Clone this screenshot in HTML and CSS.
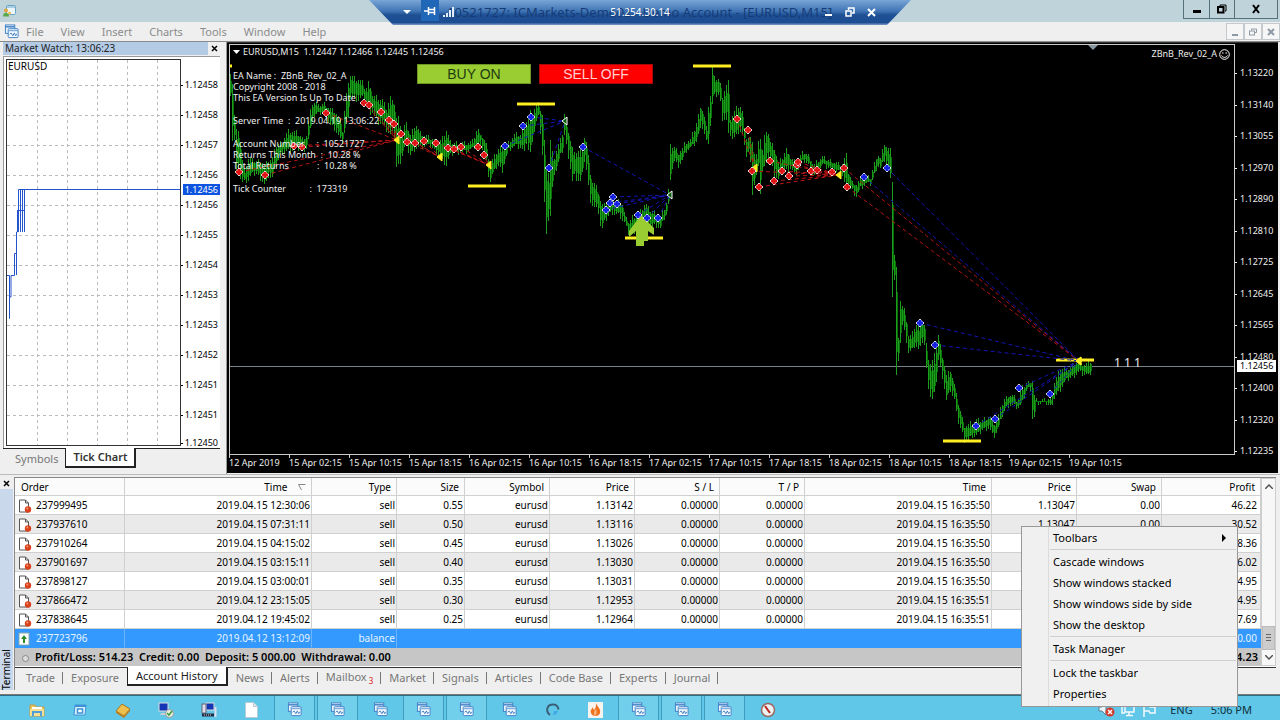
FILE: index.html
```html
<!DOCTYPE html>
<html lang="en">
<head>
    <meta charset="UTF-8">
    <meta name="viewport" content="width=device-width, initial-scale=1.0">
    <title>10521727: ICMarkets-Demo02 - Demo Account - [EURUSD,M15]</title>
    <link rel="stylesheet" href="styles.css">
</head>
<body>
    <!-- shared icons -->
    <svg class="sprites" width="0" height="0">
        <defs>
            <symbol id="i-chart" viewBox="0 0 16 16">
                <rect x="1.5" y="1" width="10" height="9" fill="#e8f3fc" stroke="#3f7fc4"/>
                <path d="M1.5 3h10" stroke="#3f7fc4" stroke-width="1.5"/>
                <rect x="4.5" y="5" width="10.5" height="9.5" rx="1" fill="#f4f9fe" stroke="#3f7fc4"/>
                <path d="M4.5 7h10.5" stroke="#7fb0e0" stroke-width="1.5"/>
                <path d="M6 11l1.5-1.5 2 3 1.5-3 1.5 3 1-2" fill="none" stroke="#3f7fc4"/>
            </symbol>
            <symbol id="i-doc" viewBox="0 0 14 14">
                <path d="M1.500 1h6l3 3v9h-9z" fill="#fff" stroke="#555"/>
                <path d="M7.500 1v3h3" fill="none" stroke="#555"/>
                <circle cx="10" cy="10.500" r="3.200" fill="#d8421c"/>
                <circle cx="9.300" cy="9.600" r="1" fill="#f59a78"/>
            </symbol>
        </defs>
    </svg>

    <header class="title-bar">
        <svg class="app-icon" width="14" height="14" viewBox="0 0 14 14">
            <rect x="3.500" y="1.500" width="9" height="9" rx="1" fill="#eaf5fb" stroke="#6aa5c8"/>
            <path d="M4 3h9" stroke="#6aa5c8"/>
            <circle cx="3" cy="6.500" r="2" fill="#e2a23c"/>
            <path d="M0 12.500c0-5 6-5 6 0z" fill="#5ba848"/>
            <circle cx="6.500" cy="9" r="1.500" fill="#f0c04a"/>
        </svg>
        <div class="window-buttons">
            <button aria-label="Minimize"><svg width="10" height="10" viewBox="0 0 10 10"><path d="M1 7.500h8" stroke="#000" stroke-width="3"/></svg></button>
            <button aria-label="Restore"><svg width="10" height="10" viewBox="0 0 10 10"><path d="M3 2V1h6v6H8" fill="none" stroke="#000"/><rect x="1" y="3" width="5.500" height="5.500" fill="none" stroke="#000" stroke-width="2"/></svg></button>
            <button class="wide" aria-label="Close"><svg width="10" height="10" viewBox="0 0 10 10"><path d="M2 1l6 8M8 1L2 9" stroke="#000" stroke-width="2"/></svg></button>
        </div>
        <div class="rdp-bar">
            <span class="rdp-title">10521727: ICMarkets-Demo02 - Demo Account - [EURUSD,M15]</span>
            <button class="rdp-menu" aria-label="Menu"><svg width="8" height="4"><path d="M0 0h8L4 4z" fill="#fff"/></svg></button>
            <button class="rdp-pin" aria-label="Pin"><svg width="12" height="10"><path d="M0 5h4M4.500 1v8M4 3.500h6M4 6.500h6M10.500 1v8" stroke="#fff" stroke-width="1.500"/></svg></button>
            <button class="rdp-signal" aria-label="Connection"><svg width="12" height="12"><path d="M1 9v2M4 7v4M7 4v7M10 1v10" stroke="#e4edf8" stroke-width="2"/></svg></button>
            <span class="rdp-ip">51.254.30.14</span>
            <button class="rdp-min" aria-label="Minimize"><svg width="8" height="10"><path d="M0 8h7" stroke="#fff" stroke-width="2"/></svg></button>
            <button class="rdp-restore" aria-label="Restore"><svg width="10" height="10"><path d="M3.500 3V1h5.500v5H7" fill="none" stroke="#fff" stroke-width="1.500"/><rect x="1" y="4" width="5" height="5" fill="none" stroke="#fff" stroke-width="1.500"/></svg></button>
            <button class="rdp-close" aria-label="Close"><svg width="9" height="9"><path d="M1 1l7 7M8 1L1 8" stroke="#fff" stroke-width="2"/></svg></button>
        </div>
    </header>

    <nav class="menu-bar">
        <svg width="15" height="15"><use href="#i-chart"/></svg>
        <button>File</button>
        <button>View</button>
        <button>Insert</button>
        <button>Charts</button>
        <button>Tools</button>
        <button>Window</button>
        <button>Help</button>
        <div class="child-buttons">
            <button aria-label="Minimize chart"><svg width="8" height="8"><path d="M1 7h6" stroke="#8d9aa6" stroke-width="2"/></svg></button>
            <button aria-label="Restore chart"><svg width="8" height="8"><path d="M2.500 2.500V1h5v3.500H6" fill="none" stroke="#8d9aa6"/><rect x=".5" y="3" width="5" height="4" fill="none" stroke="#8d9aa6"/></svg></button>
            <button aria-label="Close chart"><svg width="8" height="8"><path d="M1 1l6 6M7 1L1 7" stroke="#8d9aa6" stroke-width="2"/></svg></button>
        </div>
    </nav>

    <main class="workspace">
        <section class="market-watch">
            <div class="panel-head">
                <h2>Market Watch: 13:06:23</h2>
                <button aria-label="Close Market Watch"><svg width="7" height="7"><path d="M1 1l5 5M6 1L1 6" stroke="#000" stroke-width="1.500"/></svg></button>
            </div>
            <div class="tick-panel">
                <div class="tick-plot">
                    <span>EURUSD</span>
                    <svg id="tick-svg" width="100%" height="100%"></svg>
                </div>
                <div class="tick-scale" id="tick-scale">
                    <b class="tick-now">1.12456</b>
                </div>
            </div>
            <div class="watch-tabs">
                <button>Symbols</button>
                <button class="active">Tick Chart</button>
            </div>
        </section>

        <section class="chart">
            <div class="plot">
                <svg id="plot-svg" width="100%" height="100%"></svg>
                <div class="plot-title">
                    <svg width="7" height="4"><path d="M0 0h7L3.500 4z" fill="#fff"/></svg>
                    <span>EURUSD,M15&nbsp; 1.12447 1.12466 1.12445 1.12456</span>
                </div>
                <div class="ea-info">
                    <p>EA Name :  ZBnB_Rev_02_A
Copyright 2008 - 2018
This EA Version Is Up To Date</p>
                    <p>Server Time  :  2019.04.19 13:06:22</p>
                    <p>Account Number     :  10521727
Returns This Month  :  10.28 %
Total Returns            :  10.28 %</p>
                    <p>Tick Counter          :  173319</p>
                </div>
                <div class="ea-buttons">
                    <button class="buy">BUY ON</button>
                    <button class="sell">SELL OFF</button>
                </div>
                <div class="ea-name">
                    <span>ZBnB_Rev_02_A</span>
                    <svg width="11" height="11" viewBox="0 0 11 11"><circle cx="5.500" cy="5.500" r="4.800" fill="none" stroke="#fff"/><path d="M3 4h1.500M6.500 4H8M2.500 6.500c1 2.500 5 2.500 6 0" fill="none" stroke="#fff"/></svg>
                </div>
                <span class="ea-count">1 1 1</span>
            </div>
            <div class="price-axis" id="price-axis">
                <b class="price-now">1.12456</b>
            </div>
            <div class="time-axis" id="time-axis"></div>
        </section>
    </main>

    <section class="terminal">
        <div class="terminal-side">
            <button aria-label="Close Terminal"><svg width="7" height="7"><path d="M1 1l5 5M6 1L1 6" stroke="#000" stroke-width="1.500"/></svg></button>
            <span>Terminal</span>
        </div>
        <div class="terminal-main">
            <div class="history">
                <table>
                    <colgroup>
                        <col class="c-order"><col class="c-time"><col class="c-type"><col class="c-size">
                        <col class="c-num"><col class="c-num"><col class="c-num"><col class="c-num">
                        <col class="c-time"><col class="c-num"><col class="c-num"><col>
                    </colgroup>
                    <thead>
                        <tr>
                            <th>Order</th>
                            <th>Time <svg class="sort" width="8" height="7"><path d="M7.500 .5H.5L3.500 6" fill="none" stroke="#888"/></svg></th>
                            <th>Type</th><th>Size</th><th>Symbol</th><th>Price</th>
                            <th>S / L</th><th>T / P</th><th>Time</th><th>Price</th><th>Swap</th><th>Profit</th>
                        </tr>
                    </thead>
                    <tbody id="orders"></tbody>
                    <tfoot>
                        <tr>
                            <td colspan="11"><i class="dot"></i>Profit/Loss: 514.23&nbsp; Credit: 0.00&nbsp; Deposit: 5 000.00&nbsp; Withdrawal: 0.00</td>
                            <td>5 514.23</td>
                        </tr>
                    </tfoot>
                </table>
                <div class="scrollbar">
                    <button aria-label="Scroll up"><svg width="8" height="5"><path d="M0 5l4-4 4 4" fill="none" stroke="#555" stroke-width="1.500"/></svg></button>
                    <div class="thumb"></div>
                    <button aria-label="Scroll down"><svg width="8" height="5"><path d="M0 0l4 4 4-4" fill="none" stroke="#555" stroke-width="1.500"/></svg></button>
                </div>
            </div>
            <div class="terminal-tabs">
                <button>Trade</button>
                <button>Exposure</button>
                <button class="active">Account History</button>
                <button>News</button>
                <button>Alerts</button>
                <button>Mailbox<sub>3</sub></button>
                <button>Market</button>
                <button>Signals</button>
                <button>Articles</button>
                <button>Code Base</button>
                <button>Experts</button>
                <button>Journal</button>
            </div>
        </div>
    </section>

    <footer class="taskbar">
        <button aria-label="File Explorer"><svg width="16" height="16" viewBox="0 0 16 16"><path d="M1 3h5l1 2h8v9H1z" fill="#e9c763" stroke="#c89c3a"/><rect x="3" y="5" width="10" height="4" fill="#fff"/><path d="M1 7h14v7H1z" fill="#f6df91"/><path d="M4 14v-4h8v4" fill="none" stroke="#4f9ed8" stroke-width="2"/></svg></button>
        <button aria-label="Server window"><svg width="14" height="14" viewBox="0 0 14 14"><path d="M2 2h11l-1 10H1z" fill="#d8f0fc" stroke="#3c92d4"/><path d="M2 3h11" stroke="#3c92d4" stroke-width="2"/><path d="M4.500 6h5v4h-5z" fill="#fff" stroke="#3c92d4" stroke-width="1.500"/></svg></button>
        <button aria-label="Log book"><svg width="16" height="16" viewBox="0 0 16 16"><path d="M1 9l6-7 8 5-6 7z" fill="#f0c04e" stroke="#a8761c"/><path d="M1 9v2l8 5 6-7V7l-6 7z" fill="#b98224"/></svg></button>
        <button aria-label="Remote computer"><svg width="16" height="16" viewBox="0 0 16 16"><rect x="1" y="1" width="9" height="8" fill="#1436b4" stroke="#ddd"/><path d="M3 11h6v2H2z" fill="#ccc"/><circle cx="11.500" cy="11.500" r="4" fill="#e8efe8" stroke="#999"/><path d="M9 11l2 2 3-4" fill="none" stroke="#3a9d3a" stroke-width="1.500"/></svg></button>
        <button aria-label="Network"><svg width="16" height="16" viewBox="0 0 16 16"><rect x="5" y="1" width="8" height="7" fill="#1436b4" stroke="#ddd"/><rect x="1" y="2" width="4" height="9" fill="#dde" stroke="#667"/><path d="M1 11.500h12v3H1z" fill="#222a44"/><path d="M3 13h8" stroke="#ddd" stroke-dasharray="1 1"/><path d="M14.500 5v10" stroke="#dde" stroke-width="2"/></svg></button>
        <button aria-label="Document"><svg width="13" height="16" viewBox="0 0 13 16"><path d="M.5.500h8l4 4v11H.5z" fill="#fff" stroke="#b9cbd3"/><path d="M8.500.500v4h4" fill="#dde8ee" stroke="#b9cbd3"/></svg></button>
        <button class="open" aria-label="MT4 terminal 1"><svg width="15" height="15"><use href="#i-chart"/></svg></button>
        <button class="open" aria-label="MT4 terminal 2"><svg width="15" height="15"><use href="#i-chart"/></svg></button>
        <button aria-label="MT4 terminal 3"><svg width="15" height="15"><use href="#i-chart"/></svg></button>
        <button class="open" aria-label="MT4 terminal 4"><svg width="15" height="15"><use href="#i-chart"/></svg></button>
        <button class="open" aria-label="MT4 terminal 5"><svg width="15" height="15"><use href="#i-chart"/></svg></button>
        <button aria-label="MT4 terminal 6"><svg width="15" height="15"><use href="#i-chart"/></svg></button>
        <button aria-label="Sync"><svg width="16" height="14" viewBox="0 0 16 14"><path d="M5 12C0 8 2 1.500 8 1.500c3 0 5 2 5.500 5" fill="none" stroke="#3c5f78" stroke-width="2"/><path d="M13 8c-1 3-3 4-5 4l1-4z" fill="#3fa8e6"/></svg></button>
        <button aria-label="Flame"><svg width="15" height="16" viewBox="0 0 15 16"><rect width="15" height="16" fill="#f7f3ee"/><path d="M8 1c1 4 5 5 4 10-1 4-8 4-9 0-1-3 1-4 2-6 0 2 1 3 1 3 2-2 2-4 2-7z" fill="#f0711e"/><path d="M8 7c-2 2-3 4-1 7 2-2 2-4 1-7z" fill="#fbb47c"/></svg></button>
        <button class="open" aria-label="MT4 terminal 7"><svg width="15" height="15"><use href="#i-chart"/></svg></button>
        <button class="open" aria-label="MT4 terminal 8"><svg width="15" height="15"><use href="#i-chart"/></svg></button>
        <button class="open" aria-label="MT4 terminal 9"><svg width="15" height="15"><use href="#i-chart"/></svg></button>
        <button aria-label="Gauge"><svg width="16" height="16" viewBox="0 0 16 16"><circle cx="8" cy="8" r="6.500" fill="#eef2f2" stroke="#9a6a62" stroke-width="1.500"/><path d="M5 4l5 7" stroke="#b8231c" stroke-width="2"/></svg></button>
        <div class="tray">
            <svg width="17" height="16" viewBox="0 0 17 16"><path d="M1 5h3l4-4v12L4 9H1z" fill="#e9f5fa" stroke="#5b7f8e"/><circle cx="12" cy="10" r="4.500" fill="#d23a2c"/><path d="M10 8l4 4M14 8l-4 4" stroke="#fff" stroke-width="1.500"/></svg>
            <svg width="15" height="16" viewBox="0 0 15 16"><path d="M4 3h9v7H4zM8 10v3M5 13.500h7M1 5v6h3" fill="none" stroke="#f2fafc" stroke-width="1.500"/></svg>
            <svg width="14" height="16" viewBox="0 0 14 16"><path d="M2 2v13M2 3h5l1 2h5v6H8l-1-2H2" fill="none" stroke="#f2fafc" stroke-width="1.500"/></svg>
            <span class="lang">ENG</span>
            <span class="clock">5:06 PM</span>
        </div>
    </footer>

    <div class="context-menu" role="menu">
        <button role="menuitem">Toolbars <svg width="4" height="8"><path d="M0 0l4 4-4 4z" fill="#000"/></svg></button>
        <hr>
        <button role="menuitem">Cascade windows</button>
        <button role="menuitem">Show windows stacked</button>
        <button role="menuitem">Show windows side by side</button>
        <button role="menuitem">Show the desktop</button>
        <hr>
        <button role="menuitem">Task Manager</button>
        <hr>
        <button role="menuitem">Lock the taskbar</button>
        <button role="menuitem">Properties</button>
    </div>

    <script src="script.js"></script>
</body>
</html>
```
FILE: styles.css
```css
* {
    margin: 0;
    padding: 0;
    box-sizing: border-box;
}

body {
    height: 100vh;
    min-height: 600px;
    display: flex;
    flex-direction: column;
    overflow: hidden;
    position: relative;
    background: #efefef;
    color: #000;
    font-family: 'Noto Sans', 'Open Sans', sans-serif;
    font-size: 10px;
    line-height: 14px;
}

button {
    border: none;
    background: none;
    color: inherit;
    font: inherit;
    white-space: nowrap;
}

svg {
    display: block;
}

.sprites {
    position: absolute;
}

/* Title bar */
.title-bar {
    flex: none;
    height: 22px;
    padding: 0 2px 0 3px;
    display: flex;
    justify-content: space-between;
    background: #bfd3da;
    position: relative;
}

.app-icon {
    margin-top: 4px;
}

.window-buttons {
    display: flex;
    height: 19px;
    border: 1px solid #56717c;
    border-top: none;
}

.window-buttons button {
    width: 25px;
    display: flex;
    align-items: center;
    justify-content: center;
}

.window-buttons button + button {
    border-left: 1px solid #56717c;
}

.window-buttons .wide {
    width: 43px;
}

.rdp-bar {
    position: absolute;
    top: 0;
    left: 50%;
    width: 542px;
    height: 25px;
    margin-left: -271px;
    z-index: 2;
    background: linear-gradient(#79a5d6, #3f74b4 45%, #1e4f93 60%, #1d4e94 90%, #7f9cc4);
    clip-path: polygon(0 0, 100% 0, 518px 100%, 24px 100%);
    color: #fff;
}

.rdp-bar > * {
    position: absolute;
    top: 4px;
    height: 16px;
    display: flex;
    align-items: center;
    justify-content: center;
}

.rdp-title {
    left: 78px;
    font-size: 13px;
    white-space: nowrap;
    color: #163c78;
}

.rdp-ip {
    left: 0;
    width: 100%;
    font-size: 10px;
}

.rdp-menu {
    left: 34px;
}

.rdp-bar .rdp-pin {
    top: 0;
    left: 52px;
    width: 18px;
    height: 21px;
    background: #2167b8;
}

.rdp-signal {
    left: 74px;
}

.rdp-min {
    left: 456px;
}

.rdp-restore {
    left: 476px;
}

.rdp-close {
    left: 498px;
}

/* Menu bar */
.menu-bar {
    flex: none;
    height: 19px;
    display: flex;
    align-items: center;
    gap: 1px;
    padding-left: 4px;
    color: #8c8c8c;
    font-size: 11px;
}

.menu-bar > button {
    padding: 0 8px;
}

.menu-bar > svg {
    margin-right: -2px;
}

.child-buttons {
    margin-left: auto;
    display: flex;
}

.child-buttons button {
    width: 18px;
    height: 17px;
    border: 1px solid #c4c9ce;
    background: #f6f6f6;
    display: flex;
    align-items: center;
    justify-content: center;
}

/* Workspace */
.workspace {
    flex: 1;
    min-height: 0;
    display: flex;
    padding-right: 2px;
    border-top: 1px solid #8a8a8a;
}

.market-watch {
    flex: none;
    width: 227px;
    padding: 0 6px 4px 3px;
    display: flex;
    flex-direction: column;
    border-right: 1px solid #999;
}

.panel-head {
    display: flex;
    height: 13px;
    line-height: 13px;
}

.panel-head h2 {
    flex: 1;
    padding-left: 2px;
    background: #b4cbe6;
    font-size: 10px;
    font-weight: normal;
    color: #222;
}

.panel-head button {
    width: 12px;
    display: flex;
    align-items: center;
    justify-content: center;
}

.tick-panel {
    flex: 1;
    min-height: 0;
    margin-top: 1px;
    padding: 2px;
    border-top: 1px solid #999;
    border-left: 1px solid #999;
    background: #fff;
    display: flex;
}

.tick-plot {
    width: 176px;
    border: 1px solid #333;
    position: relative;
}

.tick-plot span {
    position: absolute;
    left: 1px;
    top: -1px;
}

.tick-scale {
    flex: 1;
    padding-top: 11px;
    font-size: 9px;
    line-height: 30px;
    position: relative;
}

.tick-scale span {
    display: block;
    padding-left: 4px;
    position: relative;
}

.tick-scale span:last-of-type {
    line-height: 26px;
}

.tick-scale span::before,
.price-axis span::before {
    content: "";
    position: absolute;
    left: 0;
    top: 50%;
    width: 2px;
    height: 1px;
    background: currentColor;
}

.tick-now {
    position: absolute;
    top: 125px;
    left: 2px;
    padding: 0 2px;
    background: #0d55e0;
    color: #fff;
    font-weight: normal;
    line-height: 11px;
}

.watch-tabs {
    flex: none;
    height: 22px;
    display: flex;
    align-items: flex-start;
    border-top: 1px solid #222;
    font-size: 11px;
    color: #777;
}

.watch-tabs button {
    height: 20px;
    padding: 0 7px;
}

.watch-tabs button:first-child {
    padding-left: 12px;
}

.watch-tabs .active {
    margin-top: -1px;
    border: 1px solid #222;
    border-width: 0 2px 2px 1px;
    background: #fff;
    color: #333;
    font-weight: 600;
}

/* Price chart */
.chart {
    flex: 1;
    min-width: 0;
    padding: 1px 0 0 2px;
    display: grid;
    grid-template: 1fr 18px / 1fr 43px;
    border-top: 1px solid #333;
    margin-bottom: 1px;
    background: #000;
    color: #eee;
    font-size: 9px;
}

.plot {
    min-width: 0;
    min-height: 0;
    border: 1px solid #ccc;
    position: relative;
    overflow: hidden;
}

.plot > div,
.plot > span {
    position: absolute;
}

.plot-title {
    top: 0;
    left: 3px;
    display: flex;
    align-items: center;
    gap: 3px;
}

.ea-info {
    top: 25px;
    left: 3px;
    line-height: 11px;
    white-space: pre;
    display: flex;
    flex-direction: column;
    gap: 12px;
}

.ea-buttons {
    top: 19px;
    left: 187px;
    display: flex;
    gap: 8px;
}

.ea-buttons button {
    width: 114px;
    height: 20px;
    font: 14px/16px 'Liberation Sans', Arial, sans-serif;
}

.ea-buttons .buy {
    background: #9acd32;
    border: 1px solid #6f9622;
    color: #1d3c10;
}

.ea-buttons .sell {
    background: #ff0000;
    border: 1px solid #a80808;
    color: #ffd0d0;
}

.ea-name {
    top: 2px;
    right: 4px;
    display: flex;
    align-items: center;
    gap: 2px;
}

.ea-count {
    left: 884px;
    top: 310px;
    font-size: 12px;
    line-height: 16px;
}

.price-axis {
    padding-top: 22px;
    display: flex;
    flex-direction: column;
    justify-content: space-between;
    position: relative;
}

.price-axis span {
    padding-left: 5px;
    margin-bottom: -3px;
    position: relative;
}

.price-now {
    position: absolute;
    left: 2px;
    right: 2px;
    top: 316px;
    padding-left: 3px;
    line-height: 12px;
    background: #fff;
    color: #000;
    font-weight: normal;
}

.time-axis {
    grid-column: 1 / 3;
    display: flex;
    overflow: hidden;
}

.time-axis span {
    flex: none;
    width: 60px;
    padding-top: 1px;
    white-space: nowrap;
    position: relative;
}

.time-axis span::before {
    content: "";
    position: absolute;
    left: 0;
    top: 0;
    width: 1px;
    height: 3px;
    background: #ccc;
}

/* Terminal */
.terminal {
    flex: none;
    display: flex;
    padding: 2px 4px 4px 0;
    border-top: 1px solid #bbb;
    border-bottom: 1px solid #777;
}

.terminal-side {
    width: 14px;
    display: flex;
    flex-direction: column;
}

.terminal-side button {
    height: 12px;
    padding-left: 3px;
}

.terminal-side span {
    flex: 1;
    margin-right: 1px;
    writing-mode: vertical-rl;
    transform: rotate(180deg);
    background: #c9d8ea;
    line-height: 13px;
}

.terminal-main {
    flex: 1;
    min-width: 0;
    border-left: 1px solid #888;
    border-top: 1px solid #888;
}

.history {
    display: flex;
    background: #fff;
    border-bottom: 1px solid #333;
    padding-bottom: 1px;
}

table {
    flex: 1;
    table-layout: fixed;
    border-collapse: separate;
    border-spacing: 0;
    width: 100%;
}

.c-order {
    width: 110px;
}

.c-time {
    width: 187px;
}

.c-type {
    width: 85px;
}

.c-size {
    width: 68px;
}

.c-num {
    width: 85px;
}

th,
td {
    height: 19px;
    padding: 0 1px 0 0;
    border-right: 1px solid #d0d0d0;
    border-bottom: 1px solid #d0d0d0;
    text-align: right;
    white-space: nowrap;
    overflow: hidden;
}

th {
    height: 18px;
    padding-right: 5px;
    background: #fbfbfb;
    font-weight: normal;
}

th:first-child {
    text-align: left;
    padding-left: 6px;
}

th .sort {
    display: inline-block;
    margin-left: 8px;
}

td:first-child {
    text-align: left;
    padding-left: 3px;
}

td:last-child {
    padding-right: 3px;
}

td svg {
    display: inline-block;
    vertical-align: -4px;
    margin-right: 4px;
}

tbody tr:nth-child(even) {
    background: #eaeaea;
}

tbody tr.selected {
    background: #3399ff;
    color: #e4f4ff;
}

.selected td {
    border-color: #3399ff;
}

.selected td:nth-child(-n+3) {
    border-right-color: #6bb4ff;
}

tfoot td {
    height: 18px;
    background: #c6c6c6;
    border: none;
    font-size: 11px;
    font-weight: 600;
}

.dot {
    display: inline-block;
    width: 7px;
    height: 7px;
    margin: 0 6px 0 4px;
    border: 1px solid #888;
    border-radius: 50%;
    background: #ddd;
    vertical-align: middle;
}

.scrollbar {
    width: 15px;
    display: flex;
    flex-direction: column;
    border: 1px solid #ccc;
    background: #f7f7f7;
}

.scrollbar button {
    height: 15px;
    display: flex;
    align-items: center;
    justify-content: center;
}

.thumb {
    height: 24px;
    margin-top: auto;
    padding: 7px 3px;
    border: 1px solid #bbb;
    background: repeating-linear-gradient(#666 0 1px, #ccc 1px 3px) content-box, #ccc;
}

.terminal-tabs {
    display: flex;
    height: 22px;
    padding-left: 3px;
    align-items: flex-start;
    font-size: 11px;
    color: #777;
}

.terminal-tabs button {
    height: 19px;
    padding: 0 8px;
    position: relative;
}

.terminal-tabs button::after {
    content: "";
    position: absolute;
    right: 0;
    top: 4px;
    height: 12px;
    width: 1px;
    background: #777;
}

.terminal-tabs .active {
    margin-top: -1px;
    border: 1px solid #222;
    border-width: 0 2px 2px 1px;
    background: #fff;
    color: #222;
}

.terminal-tabs .active::after,
.terminal-tabs button:nth-child(2)::after {
    display: none;
}

.terminal-tabs sub {
    font-size: 8px;
    line-height: 8px;
    color: #e02020;
    margin-left: 2px;
}

/* Taskbar */
.taskbar {
    flex: none;
    height: 25px;
    padding: 0 28px 0 16px;
    display: flex;
    gap: 2px;
    border-top: 1px solid #2f6d84;
    background: #60c7e8;
}

.taskbar > button {
    width: 41px;
    padding-top: 3px;
    display: flex;
    align-items: center;
    justify-content: center;
}

.taskbar .open {
    background: #72cfec;
    border-left: 1px solid #3f9dbd;
    border-right: 1px solid #3f9dbd;
}

.tray {
    margin-left: auto;
    display: flex;
    align-items: center;
    gap: 6px;
    padding-top: 3px;
    font-size: 11px;
    color: #10303c;
}

.tray .lang {
    margin: 0 12px 0 8px;
}

/* Taskbar context menu */
.context-menu {
    position: absolute;
    right: 42px;
    bottom: 13px;
    width: 217px;
    z-index: 5;
    padding: 0 1px 2px 26px;
    border: 1px solid #989898;
    background: linear-gradient(90deg, #f0f0f0 26px, #dcdcdc 26px 27px, #f0f0f0 27px);
    font-size: 11px;
}

.context-menu button {
    width: 100%;
    height: 21px;
    padding: 0 10px 0 5px;
    display: flex;
    align-items: center;
    justify-content: space-between;
    text-align: left;
}

.context-menu hr {
    height: 1px;
    margin: 1px 0 1px 2px;
    border: none;
    background: #cfcfcf;
}
```
FILE: script.js
```js
const NS = 'http://www.w3.org/2000/svg';

function add(parent, tag, attrs) {
    const el = document.createElementNS(NS, tag);
    for (const key in attrs) el.setAttribute(key, attrs[key]);
    parent.appendChild(el);
    return el;
}

function addLabels(id, labels) {
    const box = document.getElementById(id);
    labels.forEach(text => {
        const span = document.createElement('span');
        span.textContent = text;
        box.appendChild(span);
    });
}

addLabels('price-axis', ['1.13220', '1.13140', '1.13055', '1.12970', '1.12890', '1.12810', '1.12725',
    '1.12645', '1.12565', '1.12480', '1.12400', '1.12320', '1.12235']);
addLabels('time-axis', ['12 Apr 2019', '15 Apr 02:15', '15 Apr 10:15', '15 Apr 18:15', '16 Apr 02:15',
    '16 Apr 10:15', '16 Apr 18:15', '17 Apr 02:15', '17 Apr 10:15', '17 Apr 18:15', '18 Apr 02:15',
    '18 Apr 10:15', '18 Apr 18:15', '19 Apr 02:15', '19 Apr 10:15']);
addLabels('tick-scale', ['1.12458', '1.12458', '1.12457', '1.12456', '1.12456', '1.12455', '1.12454',
    '1.12453', '1.12453', '1.12452', '1.12451', '1.12451', '1.12450']);

// Tick chart
const tick = document.getElementById('tick-svg');
for (let i = 0; i < 5; i++) {
    add(tick, 'path', { d: `M${30.5 + i * 30} 0v400`, stroke: '#bbb', 'stroke-dasharray': '3 3' });
}
for (let i = 0; i < 12; i++) {
    add(tick, 'path', { d: `M0 ${25.5 + i * 30}h176`, stroke: '#bbb', 'stroke-dasharray': '3 3' });
}
add(tick, 'path', {
    d: 'M0 215.500H2.500V258.500V237H4V215.500H7.500V193.500H9.500V215V172H10.500V150.500H11.500V172M11.500 129.500V172M13.500 129.500V172M15.500 129.500V172M17.500 129.500V172M10 150.500h8M11.500 129.500H175',
    fill: 'none', stroke: '#2454cc'
});

// Price chart: [x, high, low] turning points of the bar series
const shape = [
    [0, 31, 53], [2, 37, 94], [4, 70, 95], [6, 85, 127], [9, 83, 128], [11, 110, 137], [14, 125, 137],
    [18, 113, 135], [22, 115, 129], [26, 116, 129], [30, 115, 133], [35, 120, 141], [38, 115, 131],
    [42, 113, 133], [46, 100, 120], [51, 97, 107], [55, 90, 107], [59, 85, 105], [63, 87, 105],
    [67, 88, 104], [72, 93, 105], [76, 90, 103], [79, 70, 90], [82, 58, 75], [85, 57, 70], [88, 61, 69],
    [93, 58, 68], [100, 63, 80], [105, 67, 85], [110, 75, 95], [112, 85, 97], [115, 57, 83],
    [118, 35, 70], [120, 30, 53], [124, 33, 54], [128, 34, 55], [132, 37, 53], [135, 45, 59],
    [139, 35, 67], [142, 50, 67], [147, 53, 77], [152, 55, 80], [156, 63, 85], [160, 52, 90],
    [163, 52, 80], [166, 73, 122], [169, 73, 120], [172, 90, 110], [175, 77, 100], [180, 90, 110],
    [185, 78, 103], [190, 88, 102], [195, 91, 101], [200, 93, 101], [206, 96, 107], [211, 95, 115],
    [216, 85, 120], [220, 97, 110], [225, 98, 108], [230, 97, 107], [237, 98, 107], [242, 96, 104],
    [247, 84, 101], [250, 88, 97], [254, 95, 110], [257, 103, 120], [259, 120, 140], [262, 115, 130],
    [267, 105, 120], [272, 100, 125], [278, 98, 105], [285, 89, 101], [290, 90, 103], [293, 80, 106],
    [297, 75, 95], [299, 67, 116], [302, 67, 95], [306, 59, 77], [308, 59, 72], [311, 67, 95],
    [313, 73, 125], [315, 120, 192], [318, 127, 175], [320, 95, 171], [323, 115, 130], [326, 105, 125],
    [330, 95, 110], [333, 85, 105], [334, 69, 90], [337, 80, 105], [340, 95, 123], [341, 95, 143],
    [343, 110, 130], [347, 105, 135], [351, 105, 137], [354, 91, 115], [357, 100, 130], [359, 123, 153],
    [362, 137, 160], [365, 139, 163], [368, 147, 167], [371, 160, 187], [374, 160, 177], [378, 155, 171],
    [381, 150, 167], [385, 159, 169], [389, 155, 170], [392, 159, 175], [395, 173, 180], [399, 177, 191],
    [403, 170, 187], [407, 170, 185], [415, 158, 173], [419, 165, 183], [425, 167, 180], [430, 172, 183],
    [433, 165, 175], [437, 155, 167], [439, 135, 152], [440, 101, 137], [443, 101, 115], [448, 107, 120],
    [452, 103, 115], [455, 97, 107], [460, 95, 103], [463, 87, 101], [467, 75, 95], [470, 60, 80],
    [473, 67, 85], [476, 83, 97], [478, 60, 97], [480, 50, 80], [482, 21, 60], [484, 33, 51],
    [489, 34, 50], [492, 50, 73], [496, 40, 75], [498, 37, 90], [500, 73, 89], [502, 70, 93],
    [505, 65, 93], [509, 60, 85], [512, 67, 90], [514, 80, 97], [516, 93, 111], [519, 93, 105],
    [522, 95, 148], [525, 115, 135], [529, 93, 120], [530, 92, 147], [532, 105, 127], [535, 85, 120],
    [537, 84, 110], [540, 97, 115], [544, 103, 130], [548, 118, 135], [552, 112, 125], [557, 103, 125],
    [560, 113, 123], [565, 117, 130], [573, 107, 115], [578, 110, 120], [583, 120, 132], [588, 115, 125],
    [592, 112, 120], [598, 115, 123], [605, 117, 127], [611, 120, 127], [616, 110, 145], [618, 127, 142],
    [622, 137, 145], [626, 139, 151], [630, 133, 143], [636, 131, 139], [640, 133, 139], [643, 121, 133],
    [647, 109, 120], [650, 113, 123], [654, 98, 115], [657, 103, 123], [660, 105, 135], [662, 135, 250],
    [664, 210, 235], [666, 223, 331], [668, 290, 313], [670, 255, 297], [672, 261, 280], [675, 267, 290],
    [678, 290, 307], [681, 291, 307], [685, 280, 300], [688, 280, 305], [691, 273, 295], [694, 280, 300],
    [696, 300, 325], [699, 320, 350], [703, 315, 357], [706, 300, 335], [708, 290, 315], [712, 310, 331],
    [716, 330, 355], [720, 325, 345], [724, 340, 355], [727, 355, 375], [731, 370, 385], [734, 380, 395],
    [738, 379, 395], [742, 377, 391], [746, 375, 391], [752, 375, 385], [758, 371, 383], [760, 372, 385],
    [763, 380, 393], [768, 370, 383], [773, 355, 367], [778, 350, 360], [783, 350, 360], [787, 357, 363],
    [791, 343, 360], [797, 337, 343], [801, 337, 343], [802, 335, 373], [804, 350, 372], [806, 355, 358],
    [816, 355, 358], [820, 353, 361], [824, 337, 353], [830, 323, 345], [836, 325, 335], [842, 319, 332],
    [848, 315, 327], [853, 320, 329], [858, 318, 331], [861, 316, 327]
];

// closed trades: entries joined to their common exit
const trades = [
    { side: 'sell', exit: [167, 95], entries: [[9, 127], [35, 130], [64, 101], [72, 102], [96, 68], [134, 58], [139, 60], [151, 67], [159, 75], [164, 79]] },
    { side: 'sell', exit: [210, 112], entries: [[171, 89], [177, 97], [185, 98], [194, 96]] },
    { side: 'sell', exit: [259, 120], entries: [[206, 98], [218, 103], [224, 104], [231, 102], [248, 102], [254, 110]] },
    { side: 'buy', exit: [335, 76], entries: [[275, 101], [293, 81], [301, 72], [319, 123]] },
    { side: 'buy', exit: [440, 150], entries: [[353, 102], [376, 165], [380, 158], [383, 152], [387, 159], [408, 170], [417, 173], [428, 173]] },
    { side: 'sell', exit: [525, 123], entries: [[507, 74], [518, 85]] },
    { side: 'sell', exit: [609, 130], entries: [[522, 126], [529, 142], [540, 116], [544, 136], [552, 126], [559, 131], [567, 120], [568, 117], [581, 126], [587, 125], [602, 127]] },
    { side: 'sell', exit: [849, 316], entries: [[614, 123], [617, 142]] },
    { side: 'buy', exit: [849, 316], entries: [[634, 132], [657, 123], [690, 278], [705, 300], [746, 381], [765, 374], [789, 343], [820, 349]] }
];

const levels = [[-36, 21], [287, 59], [238, 141], [463, 21], [395, 193], [713, 396], [826, 315]];
const plot = document.getElementById('plot-svg');

add(plot, 'path', { d: 'M0 321.500h3000', stroke: '#77838c' });
add(plot, 'path', { d: 'M858 0h10l-5 5z', fill: '#8896a0' });

let body = '';
let wick = '';
let seg = 0;
for (let x = 0; x <= 861; x += 2) {
    while (seg < shape.length - 2 && shape[seg + 1][0] <= x) seg++;
    const [x0, h0, l0] = shape[seg];
    const [x1, h1, l1] = shape[seg + 1];
    const t = Math.min(1, (x - x0) / (x1 - x0));
    const high = h0 + (h1 - h0) * t;
    const low = l0 + (l1 - l0) * t;
    const noise = (x * 37 % 11) - 5;
    const inset = (low - high) * 0.22;
    wick += `M${x + 0.5} ${Math.round(high + noise / 2)}V${Math.round(low + noise / 2)}`;
    body += `M${x + 1} ${Math.round(high + inset)}V${Math.round(low - inset)}`;
}
add(plot, 'path', { d: body, stroke: '#067006', 'stroke-width': 2 });
add(plot, 'path', { d: wick, stroke: '#1d9c1d' });

levels.forEach(([x, y]) => {
    add(plot, 'path', { d: `M${x} ${y}h38`, stroke: '#ffee22', 'stroke-width': 3 });
});
add(plot, 'path', { d: 'M411 170l13 13v7l-6-4v10h-4v5h-8v-15l-7 6v-6z', fill: '#9acd32' });

trades.forEach(trade => {
    const color = trade.side === 'buy' ? '#1414b4' : '#b41414';
    const [ex, ey] = trade.exit;
    trade.entries.forEach(([x, y]) => {
        add(plot, 'path', { d: `M${x} ${y}L${ex} ${ey}`, stroke: color, 'stroke-dasharray': '4 3' });
    });
});
trades.forEach(trade => {
    const color = trade.side === 'buy' ? '#1420e0' : '#e01414';
    const [ex, ey] = trade.exit;
    const outline = trade.side === 'buy' && ex < 800;
    trade.entries.forEach(([x, y]) => {
        add(plot, 'path', { d: `M${x} ${y - 4}l4 4-4 4-4-4z`, fill: '#fff', stroke: '#ddd' });
        add(plot, 'path', { d: `M${x - 3} ${y}h6M${x} ${y - 3}v6`, stroke: color, 'stroke-width': 3 });
    });
    add(plot, 'path', {
        d: `M${ex - 3} ${ey}l5-4v8z`,
        fill: outline ? '#0a5a0a' : '#ffee22',
        stroke: outline ? '#fff' : '#ffee22'
    });
});

// Account history
const orders = [
    ['237999495', '2019.04.15 12:30:06', '0.55', '1.13142', '2019.04.15 16:35:50', '46.22'],
    ['237937610', '2019.04.15 07:31:11', '0.50', '1.13116', '2019.04.15 16:35:50', '30.52'],
    ['237910264', '2019.04.15 04:15:02', '0.45', '1.13026', '2019.04.15 16:35:50', '-8.36'],
    ['237901697', '2019.04.15 03:15:11', '0.40', '1.13030', '2019.04.15 16:35:50', '-6.02'],
    ['237898127', '2019.04.15 03:00:01', '0.35', '1.13031', '2019.04.15 16:35:50', '-4.95'],
    ['237866472', '2019.04.12 23:15:05', '0.30', '1.12953', '2019.04.15 16:35:51', '-24.95'],
    ['237838645', '2019.04.12 19:45:02', '0.25', '1.12964', '2019.04.15 16:35:51', '-17.69']
];
const docIcon = '<svg width="14" height="14"><use href="#i-doc"/></svg>';
const balanceIcon = '<svg width="14" height="14"><rect x="1" y="1" width="10" height="12" fill="#fff" stroke="#8aa"/><path d="M6 3l3 4H7v4H5V7H3z" fill="#2a8a2a"/></svg>';

document.getElementById('orders').innerHTML = orders.map(([id, opened, size, price, closed, profit]) =>
    `<tr><td>${docIcon}${id}</td><td>${opened}</td><td>sell</td><td>${size}</td><td>eurusd</td><td>${price}</td>` +
    `<td>0.00000</td><td>0.00000</td><td>${closed}</td><td>1.13047</td><td>0.00</td><td>${profit}</td></tr>`
).join('') +
    `<tr class="selected"><td>${balanceIcon}237723796</td><td>2019.04.12 13:12:09</td><td>balance</td>` +
    '<td></td><td></td><td></td><td></td><td></td><td></td><td></td><td></td><td>5 000.00</td></tr>';
```
